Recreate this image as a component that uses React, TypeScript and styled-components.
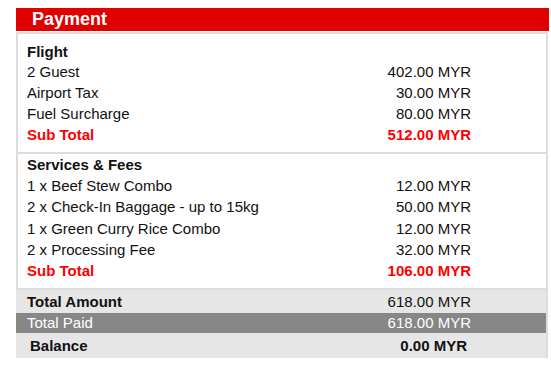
import React from "react";
import styled, { createGlobalStyle } from "styled-components";

const GlobalStyle = createGlobalStyle`
  html, body {
    margin: 0;
    padding: 0;
    background: #ffffff;
  }
  body {
    font-family: "Liberation Sans", Arial, Helvetica, sans-serif;
    color: #111111;
  }
`;

const Page = styled.div`
  padding: 8px 0 0 16px;
`;

const Panel = styled.section`
  width: 533px;
  display: flex;
  flex-direction: column;
`;

const Header = styled.h2`
  margin: 0;
  height: 23px;
  line-height: 23px;
  padding-left: 16px;
  background: #e00000;
  color: #ffffff;
  font-size: 18px;
  font-weight: bold;
`;

const Box = styled.div`
  width: 532px;
  box-sizing: border-box;
  margin-top: 1px;
  border: 2px solid #dddddd;
  border-bottom: none;
  display: flex;
  flex-direction: column;
`;

const Section = styled.div<{ $top: number; $bottom: number }>`
  padding-top: ${(p) => p.$top}px;
  padding-bottom: ${(p) => p.$bottom}px;
  border-bottom: 2px solid #dddddd;
`;

const SectionTitle = styled.div<{ $lead: number }>`
  padding-left: 9px;
  font-size: 15px;
  line-height: ${(p) => p.$lead}px;
  font-weight: bold;
  color: #111111;
`;

const Row = styled.div<{ $sub?: boolean }>`
  display: grid;
  grid-template-columns: 1fr auto;
  padding: 0 75px 0 9px;
  font-size: 15px;
  line-height: 21.3px;
  font-weight: ${(p) => (p.$sub ? "bold" : "normal")};
  color: ${(p) => (p.$sub ? "#ff0000" : "#111111")};
`;

const Amount = styled.span`
  text-align: right;
`;

const Totals = styled.div`
  margin-left: -2px;
  background: #e6e6e6;
  display: flex;
  flex-direction: column;
`;

type TotalKind = "amount" | "paid" | "balance";

const rowHeight: Record<TotalKind, number> = { amount: 23, paid: 20, balance: 25 };
const rowLead: Record<TotalKind, number> = { amount: 23, paid: 20, balance: 26 };

const TotalRow = styled.div<{ $kind: TotalKind }>`
  display: grid;
  grid-template-columns: 1fr auto;
  font-size: 15px;
  height: ${(p) => rowHeight[p.$kind]}px;
  line-height: ${(p) => rowLead[p.$kind]}px;
  padding: ${(p) => (p.$kind === "balance" ? "0 79px 0 14px" : "0 75px 0 11px")};
  background: ${(p) => (p.$kind === "paid" ? "#878787" : "transparent")};
  color: ${(p) => (p.$kind === "paid" ? "#ffffff" : "#111111")};
`;

const TotalLabel = styled.span<{ $bold?: boolean }>`
  font-weight: ${(p) => (p.$bold ? "bold" : "normal")};
`;

const TotalValue = styled.span<{ $bold?: boolean }>`
  text-align: right;
  font-weight: ${(p) => (p.$bold ? "bold" : "normal")};
`;

type Item = { label: string; amount: string };

const flight: Item[] = [
  { label: "2 Guest", amount: "402.00 MYR" },
  { label: "Airport Tax", amount: "30.00 MYR" },
  { label: "Fuel Surcharge", amount: "80.00 MYR" },
];

const services: Item[] = [
  { label: "1 x Beef Stew Combo", amount: "12.00 MYR" },
  { label: "2 x Check-In Baggage - up to 15kg", amount: "50.00 MYR" },
  { label: "1 x Green Curry Rice Combo", amount: "12.00 MYR" },
  { label: "2 x Processing Fee", amount: "32.00 MYR" },
];

const Group: React.FC<{
  title: string;
  lead: number;
  items: Item[];
  subtotal: string;
  top: number;
  bottom: number;
}> = ({ title, lead, items, subtotal, top, bottom }) => (
  <Section $top={top} $bottom={bottom}>
    <SectionTitle $lead={lead}>{title}</SectionTitle>
    {items.map((it) => (
      <Row key={it.label}>
        <span>{it.label}</span>
        <Amount>{it.amount}</Amount>
      </Row>
    ))}
    <Row $sub>
      <span>Sub Total</span>
      <Amount>{subtotal}</Amount>
    </Row>
  </Section>
);

export default function App() {
  return (
    <>
      <GlobalStyle />
      <Page>
        <Panel>
          <Header>Payment</Header>
          <Box>
            <Group title="Flight" lead={17.5} items={flight} subtotal="512.00 MYR" top={9} bottom={6} />
            <Group title="Services & Fees" lead={21.3} items={services} subtotal="106.00 MYR" top={0} bottom={7} />
            <Totals>
              <TotalRow $kind="amount">
                <TotalLabel $bold>Total Amount</TotalLabel>
                <TotalValue>618.00 MYR</TotalValue>
              </TotalRow>
              <TotalRow $kind="paid">
                <TotalLabel>Total Paid</TotalLabel>
                <TotalValue>618.00 MYR</TotalValue>
              </TotalRow>
              <TotalRow $kind="balance">
                <TotalLabel $bold>Balance</TotalLabel>
                <TotalValue $bold>0.00 MYR</TotalValue>
              </TotalRow>
            </Totals>
          </Box>
        </Panel>
      </Page>
    </>
  );
}
